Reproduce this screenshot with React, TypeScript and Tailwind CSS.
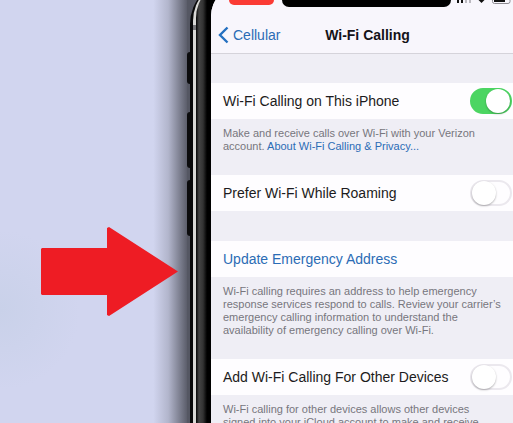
import { ReactNode } from "react";

const SettingRow = ({
  id,
  label,
  defaultChecked = false,
}: {
  id: string;
  label: string;
  defaultChecked?: boolean;
}) => {
  return (
    <div className="flex h-9 items-center justify-between bg-[#fefdff] pr-px pl-3">
      <label htmlFor={id} className="text-[14px] whitespace-nowrap text-[#1c1b20]">
        {label}
      </label>
      <input
        id={id}
        type="checkbox"
        role="switch"
        defaultChecked={defaultChecked}
        className="flex h-[26px] w-[42px] shrink-0 appearance-none items-center rounded-full border-2 border-[#ebe8ee] bg-[#fefdff] before:size-6 before:shrink-0 before:rounded-full before:bg-white before:shadow-[0_1px_2px_rgba(0,0,0,0.3)] checked:justify-end checked:border-[#4cd562] checked:bg-[#4cd562]"
      />
    </div>
  );
};

const FooterNote = ({ children }: { children: ReactNode }) => {
  return (
    <p className="px-3 pt-2 pb-[22px] text-[11px] leading-[13px] whitespace-nowrap text-[#77767d]">
      {children}
    </p>
  );
};

const StatusBar = () => {
  return (
    <div className="flex h-[18px] items-start pl-[18px]">
      {/* Recording pill */}
      <div className="h-[5px] w-[45px] rounded-b-[6px] bg-[#fb3b34]" />
      {/* Notch */}
      <div className="ml-2 h-[7px] w-[169px] rounded-b-[14px] bg-black" />
      <svg className="ml-[5px]" width="56" height="6" viewBox="0 0 56 6" aria-hidden="true">
        <rect x="1" y="0" width="2" height="3" fill="#111" />
        <rect x="5" y="0" width="2" height="3" fill="#111" />
        <rect x="9" y="0" width="2" height="3" fill="#bbb9c0" />
        <rect x="13" y="0" width="2" height="3" fill="#bbb9c0" />
        <path d="M22.5 0h6L25.5 3z" fill="#111" />
        <path d="M36.5 0v1.5a2 2 0 0 0 2 2H52a2 2 0 0 0 2-2V0" fill="none" stroke="#8d8b92" />
        <rect x="38" y="0" width="11" height="2" fill="#111" />
      </svg>
    </div>
  );
};

const NavBar = () => {
  return (
    <header className="grid h-9 grid-cols-[1fr_auto_1fr] items-center border-b border-[#d5d3da] pb-px pl-[7px]">
      <a href="#" className="flex items-center gap-1 text-[14px] text-[#2b6cb5]">
        <svg width="11" height="18" viewBox="0 0 11 18" aria-hidden="true">
          <path d="M9.5 1.5L2 9l7.5 7.5" fill="none" stroke="#2470c0" strokeWidth="2.4" />
        </svg>
        Cellular
      </a>
      <h1 className="pl-1 text-[14px] font-semibold text-[#141318]">Wi-Fi Calling</h1>
    </header>
  );
};

const SideButtons = () => {
  return (
    <div className="flex w-[3px] shrink-0 flex-col pt-[52px]">
      <div className="h-8 rounded-l-sm bg-[#0b0b0d]" />
      <div className="mt-7 h-14 rounded-l-sm bg-[#0b0b0d]" />
      <div className="mt-3 h-14 rounded-l-sm bg-[#0b0b0d]" />
    </div>
  );
};

const App = () => {
  return (
    <main className="flex h-screen overflow-hidden bg-[#d1d5ee] font-['Liberation_Sans',Arial,sans-serif]">
      {/* Desk with the pointer arrow */}
      <div className="flex w-[187px] shrink-0 items-start bg-[linear-gradient(to_right,transparent_82%,rgba(85,87,99,0.25)_90%,#5c5e6b_100%),radial-gradient(circle_at_0px_310px,#c9d1e9,#d1d5ef_80px)] pt-[227px] pl-[41px]">
        <svg width="138" height="90" viewBox="0 0 138 90" role="img" aria-label="Arrow">
          <path d="M1 21H66V1L68 0L137 44.500L68 89L66 88V68H1L0 67V22z" fill="#ee1c24" />
        </svg>
      </div>
      <div className="flex min-w-0 flex-1 bg-[#555763]">
        <SideButtons />
        {/* Phone frame */}
        <div className="-mt-5 flex min-w-0 flex-1 rounded-tl-[44px] bg-[#09090a] pl-[3px]">
          <div className="flex min-w-0 flex-1 rounded-tl-[41px] bg-[linear-gradient(#d9d9d6_45px,#77777a_45px,#77777a_50px,#d9d9d6_50px)] pl-[3px]">
            <div className="min-w-0 flex-1 rounded-tl-[38px] bg-[linear-gradient(to_right,#050505_0px,#444444_3px,#333333_7px,#000000_11px)] pt-[6px] pl-[15px]">
              <div className="min-h-full overflow-hidden rounded-tl-[30px] bg-[#efeef5] pt-[14px]">
                <div className="bg-[#f8f6fc]">
                  <StatusBar />
                  <NavBar />
                </div>
                <div className="pt-[29px]">
                  <SettingRow id="wifi-calling" label="Wi-Fi Calling on This iPhone" defaultChecked />
                  <FooterNote>
                    Make and receive calls over Wi-Fi with your Verizon
                    <br />
                    account.{" "}
                    <a href="#" className="text-[#2b6cb5]">
                      About Wi-Fi Calling &amp; Privacy...
                    </a>
                  </FooterNote>
                  <SettingRow id="roaming" label="Prefer Wi-Fi While Roaming" />
                  <button className="mt-[30px] flex h-9 w-full items-center bg-[#fefdff] pl-3 text-[14px] text-[#2b6cb5]">
                    Update Emergency Address
                  </button>
                  <FooterNote>
                    Wi-Fi calling requires an address to help emergency
                    <br />
                    response services respond to calls. Review your carrier’s
                    <br />
                    emergency calling information to understand the
                    <br />
                    availability of emergency calling over Wi-Fi.
                  </FooterNote>
                  <SettingRow id="other-devices" label="Add Wi-Fi Calling For Other Devices" />
                  <FooterNote>
                    Wi-Fi calling for other devices allows other devices
                    <br />
                    signed into your iCloud account to make and receive
                  </FooterNote>
                </div>
              </div>
            </div>
          </div>
        </div>
      </div>
    </main>
  );
};

export default App;
